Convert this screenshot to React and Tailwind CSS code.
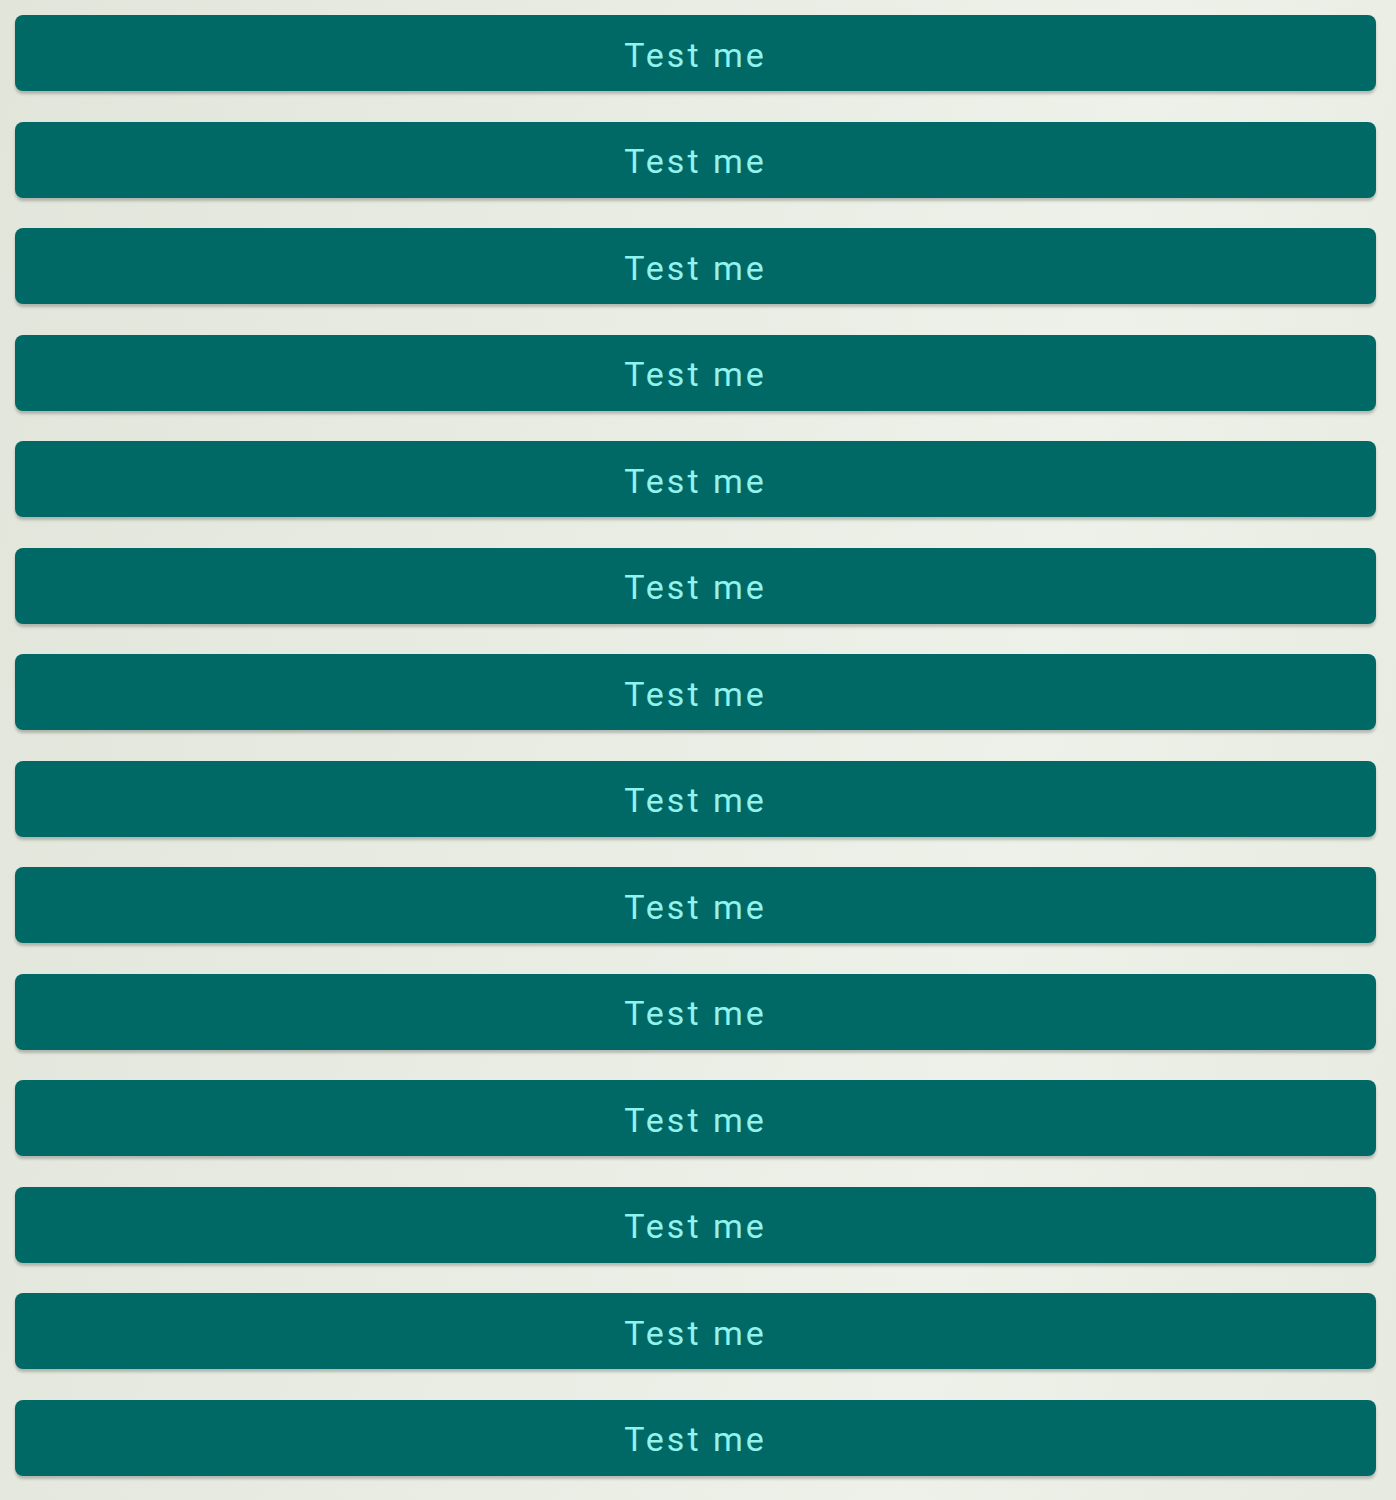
export default function App() {
  const items = Array.from({ length: 14 });
  return (
    <div className="min-h-[1500px] w-full bg-[linear-gradient(100deg,#e1e5da_0%,#e9ece3_40%,#eef1e9_70%,#e6eae0_100%)] pt-[15px] pl-[15px] pr-[20px]" style={{ fontFamily: "Roboto, 'Liberation Sans', sans-serif" }}>
      <div className="flex flex-col gap-[30.5px]">
        {items.map((_, i) => (
          <button
            key={i}
            className="h-[76px] w-full rounded-[8px] bg-[#006966] text-[#92f3ee] text-[34px] tracking-[3px] leading-none pt-[3px] shadow-[0_3px_3px_rgba(0,0,0,0.22)] flex items-center justify-center"
          >
            Test me
          </button>
        ))}
      </div>
    </div>
  );
}
